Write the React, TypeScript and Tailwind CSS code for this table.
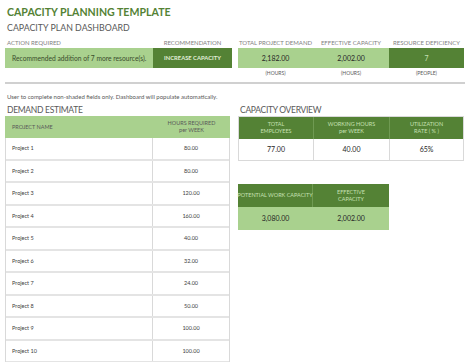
import React from "react";

const DARK = "bg-[#548235]";
const LIGHT = "bg-[#a9d18e]";

const projects = [
  ["Project 1", "80.00"],
  ["Project 2", "80.00"],
  ["Project 3", "120.00"],
  ["Project 4", "160.00"],
  ["Project 5", "40.00"],
  ["Project 6", "32.00"],
  ["Project 7", "24.00"],
  ["Project 8", "50.00"],
  ["Project 9", "100.00"],
  ["Project 10", "100.00"],
];

export default function App() {
  return (
    <div
      className="w-[474px] h-[362px] overflow-hidden bg-white text-[#404040]"
      style={{ fontFamily: "'Lato', 'DejaVu Sans', sans-serif" }}
    >
      <div className="pl-[7px] pt-[6px] h-[23px] text-[10.6px] font-bold leading-[13px] text-[#548235]">
        CAPACITY PLANNING TEMPLATE
      </div>
      <div className="pl-[7px] h-[15px] text-[8.8px] leading-[10px] text-[#595959]">
        CAPACITY PLAN DASHBOARD
      </div>
      {/* dashboard */}
      <div className="flex pl-[5px] gap-[6px]">
        <div className="w-[227px]">
          <div className="flex h-[10px] text-[6px] leading-[9px] text-[#7f7f7f]">
            <div className="w-[148px] pl-[2px]">ACTION REQUIRED</div>
            <div className="flex-1 text-center">RECOMMENDATION</div>
          </div>
          <div className="flex h-[20px]">
            <div className={`w-[148px] ${LIGHT} flex items-center pl-[7px] text-[6.7px] text-[#3a4d2c]`}>
              Recommended addition of 7 more resource(s).
            </div>
            <div className={`flex-1 ${DARK} flex items-center justify-center text-[5.8px] font-bold text-[#e2efda]`}>
              INCREASE CAPACITY
            </div>
          </div>
        </div>
        <div className="w-[226px]">
          <div className="flex h-[10px] text-[6px] leading-[9px] text-[#7f7f7f]">
            <div className="w-[75px] text-center">TOTAL PROJECT DEMAND</div>
            <div className="w-[76px] text-center">EFFECTIVE CAPACITY</div>
            <div className="flex-1 text-center">RESOURCE DEFICIENCY</div>
          </div>
          <div className="flex h-[20px] text-[7px]">
            <div className={`w-[75px] ${LIGHT} flex items-center justify-center text-[#262626]`}>2,182.00</div>
            <div className={`w-[76px] ${LIGHT} flex items-center justify-center text-[#262626]`}>2,002.00</div>
            <div className={`flex-1 ${DARK} flex items-center justify-center text-[#c6e0b4]`}>7</div>
          </div>
          <div className="flex h-[10px] text-[5px] leading-[10px] text-[#595959]">
            <div className="w-[75px] text-center">(HOURS)</div>
            <div className="w-[76px] text-center">(HOURS)</div>
            <div className="flex-1 text-center">(PEOPLE)</div>
          </div>
        </div>
      </div>
      <div className="ml-[5px] mt-[4px] w-[460px] h-[2px] bg-[#d0d0d0]" />
      <div className="pl-[7px] pt-[9px] h-[22px] text-[6px] leading-[8px] text-[#595959]">
        User to complete non-shaded fields only. Dashboard will populate automatically.
      </div>
      <div className="flex pl-[5px] gap-[8px]">
        {/* demand estimate */}
        <div className="w-[225px]">
          <div className="h-[10px] pl-[2px] text-[8.5px] leading-[8px] text-[#595959] tracking-[-0.3px]">DEMAND ESTIMATE</div>
          <div className={`flex h-[22px] ${LIGHT} text-[5.5px] text-[#595959]`}>
            <div className="w-[148px] flex items-center pl-[7px]">PROJECT NAME</div>
            <div className="flex-1 flex flex-col items-center justify-center leading-[7px]">
              <span>HOURS REQUIRED</span>
              <span>per WEEK</span>
            </div>
          </div>
          <div className="border-l border-r border-[#d9d9d9]">
            {projects.map(([n, h]) => (
              <div key={n} className="flex h-[22.5px] border-b-2 border-[#e4e4e4] text-[5.5px] text-[#404040]">
                <div className="w-[147px] border-r border-[#d9d9d9] flex items-center pl-[6px]">{n}</div>
                <div className="flex-1 flex items-center justify-center">{h}</div>
              </div>
            ))}
          </div>
        </div>
        {/* capacity overview */}
        <div className="w-[226px]">
          <div className="h-[10px] pl-[2px] text-[8.5px] leading-[8px] text-[#595959] tracking-[-0.3px]">CAPACITY OVERVIEW</div>
          <div className="border border-[#d9d9d9]">
            <div className={`flex h-[22px] ${DARK} text-[5.5px] text-[#c6e0b4] leading-[7px]`}>
              <div className="w-[75px] flex flex-col items-center justify-center border-r border-[#6f9a52]">
                <span>TOTAL</span>
                <span>EMPLOYEES</span>
              </div>
              <div className="w-[76px] flex flex-col items-center justify-center border-r border-[#6f9a52]">
                <span>WORKING HOURS</span>
                <span>per WEEK</span>
              </div>
              <div className="flex-1 flex flex-col items-center justify-center">
                <span>UTILIZATION</span>
                <span>RATE ( % )</span>
              </div>
            </div>
            <div className="flex h-[21px] text-[7px] text-[#262626]">
              <div className="w-[75px] flex items-center justify-center border-r border-[#d9d9d9]">77.00</div>
              <div className="w-[76px] flex items-center justify-center border-r border-[#d9d9d9]">40.00</div>
              <div className="flex-1 flex items-center justify-center">65%</div>
            </div>
          </div>
          <div className="mt-[23px] w-[151px]">
            <div className={`flex h-[23px] ${DARK} text-[5.5px] text-[#c6e0b4] leading-[7px]`}>
              <div className="w-[75px] flex items-center justify-center border-r border-[#6f9a52] whitespace-nowrap">
                POTENTIAL WORK CAPACITY
              </div>
              <div className="flex-1 flex flex-col items-center justify-center">
                <span>EFFECTIVE</span>
                <span>CAPACITY</span>
              </div>
            </div>
            <div className={`flex h-[23px] ${LIGHT} text-[7px] text-[#262626]`}>
              <div className="w-[75px] flex items-center justify-center">3,080.00</div>
              <div className="flex-1 flex items-center justify-center">2,002.00</div>
            </div>
          </div>
        </div>
      </div>
    </div>
  );
}
